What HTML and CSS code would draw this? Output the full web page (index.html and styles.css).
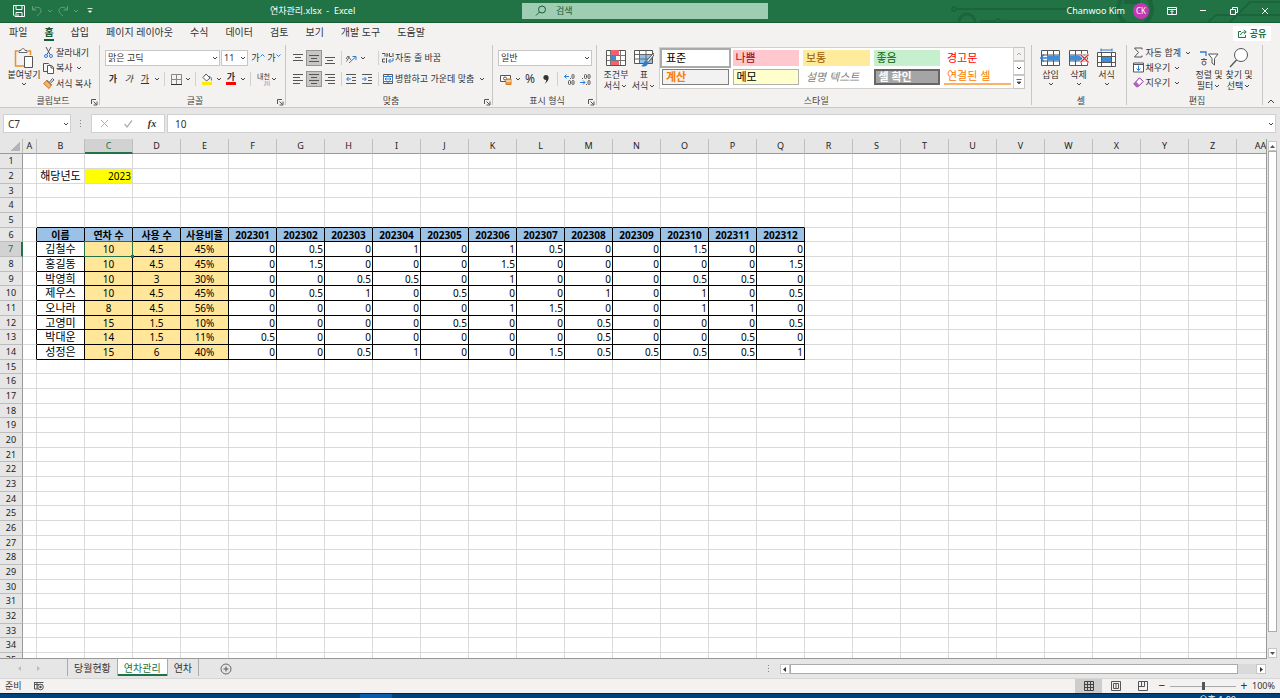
FILE: index.html
```
<!DOCTYPE html>
<html lang="ko">
<head>
<meta charset="utf-8">
<meta name="viewport" content="width=device-width, initial-scale=1">
<title>연차관리.xlsx - Excel</title>
<link rel="stylesheet" href="styles.css">
</head>
<body>
<svg class="defs" aria-hidden="true">
<symbol id="i-chev" viewBox="0 0 8 8"><path d="M2 3l2 2 2-2" fill="none" stroke="#444"/></symbol>
<symbol id="i-launch" viewBox="0 0 8 8"><path d="M1.500 6V1.500H6M3.500 3.500l3 3M7 3.500V7H3.500" fill="none" stroke="#555"/></symbol>
</svg>

<header class="titlebar">
<div class="quick">
<button aria-label="저장"><svg width="12" height="12" viewBox="0 0 12 12"><path d="M.5.5h11v11H2L.5 10zM3 .5v4h6v-4M3 11V7.500h6V11M5 11V9" fill="none" stroke="#fff"/></svg></button>
<button class="dim" aria-label="실행 취소"><svg width="12" height="12" viewBox="0 0 12 12"><path d="M1.500 1v4h4M2 4.500C5 1 10 2 10 5.500 10 8 8 9 6 11" fill="none" stroke="#fff"/></svg></button>
<button class="dim small" aria-label="취소 목록"><svg width="8" height="8" viewBox="0 0 8 8"><path d="M2 3l2 2 2-2" fill="none" stroke="#fff"/></svg></button>
<button class="dim" aria-label="다시 실행"><svg width="12" height="12" viewBox="0 0 12 12"><path d="M10.500 1v4h-4M10 4.500C7 1 2 2 2 5.500 2 8 4 9 6 11" fill="none" stroke="#fff"/></svg></button>
<button class="dim small" aria-label="다시 실행 목록"><svg width="8" height="8" viewBox="0 0 8 8"><path d="M2 3l2 2 2-2" fill="none" stroke="#fff"/></svg></button>
<button class="custom" aria-label="도구 모음 사용자 지정"><svg width="8" height="8" viewBox="0 0 8 8"><path d="M1.500 1.500h5M2.500 4h3L4 5.500z" fill="#fff" stroke="#fff" stroke-width=".8"/></svg></button>
</div>
<div class="doc">연차관리.xlsx&nbsp; -&nbsp; Excel</div>
<label class="search"><svg width="12" height="12" viewBox="0 0 12 12"><circle cx="7" cy="4.500" r="3.500" fill="none" stroke="#185c37"/><path d="M4.500 7L1 10.500" stroke="#185c37"/></svg><input type="text" placeholder="검색" aria-label="검색"></label>
<svg class="circuit" width="330" height="22" viewBox="0 0 330 22" aria-hidden="true"><g fill="none" stroke="#1c653c" stroke-width="2"><circle cx="4" cy="9" r="2"/><path d="M6 9h110"/><circle cx="120" cy="9" r="2"/><circle cx="17" cy="22" r="8" stroke-width="3"/><path d="M30 21h16M50 21h90"/><circle cx="48" cy="21" r="2"/><path d="M258 22l8-7h64M280 22l20-20h30"/><circle cx="185" cy="9" r="17" stroke-width="4"/><path d="M174 2h14v12" stroke-width="4"/></g></svg>
<div class="account">
<span class="user">Chanwoo Kim</span>
<span class="avatar">CK</span>
</div>
<div class="winbtns">
<button aria-label="리본 표시 옵션"><svg width="10" height="8" viewBox="0 0 10 8"><path d="M.5.5h9v7h-9zM.5 2.500h9M5 7V4M3.500 5L5 3.500 6.500 5" fill="none" stroke="#fff"/></svg></button>
<button aria-label="최소화"><svg width="8" height="8" viewBox="0 0 8 8"><path d="M1 3.500h6" stroke="#fff"/></svg></button>
<button aria-label="이전 크기로"><svg width="8" height="8" viewBox="0 0 8 8"><path d="M.5 2.500h5v5h-5zM2.500 2V.5h5v5H6" fill="none" stroke="#fff"/></svg></button>
<button aria-label="닫기"><svg width="8" height="8" viewBox="0 0 8 8"><path d="M1 1l6 6M7 1L1 7" stroke="#fff"/></svg></button>
</div>
</header>

<nav class="tabs">
<button>파일</button>
<button class="on">홈</button>
<button>삽입</button>
<button>페이지 레이아웃</button>
<button>수식</button>
<button>데이터</button>
<button>검토</button>
<button>보기</button>
<button>개발 도구</button>
<button>도움말</button>
<button class="share"><svg width="9" height="9" viewBox="0 0 9 9"><path d="M3 2.500H.5v6h7V6M2.500 6c.5-2 2-3 5-3M6 .8L8.200 3 6 5.200" fill="none" stroke="#217346"/></svg>공유</button>
</nav>

<section class="ribbon">
<div class="group g-clip">
<div class="body">
<button class="big"><svg width="20" height="20" viewBox="0 0 20 20"><path d="M4 3H1.500v15H10M14 3h2.500v4" fill="none" stroke="#e8912d" stroke-width="1.500"/><path d="M5 4.500V2.500h2C7 0 11 0 11 2.500h2v2z" fill="#fff" stroke="#666"/><path d="M10.500 8.500h8v11h-8z" fill="#fff" stroke="#555"/></svg>붙여넣기<svg class="chev"><use href="#i-chev"/></svg></button>
<div class="stack">
<button><svg width="11" height="11" viewBox="0 0 11 11"><path d="M3 0l4 7.500M8 0L4 7.500" stroke="#555" fill="none"/><circle cx="3" cy="9" r="1.500" fill="none" stroke="#2b7cd3"/><circle cx="8" cy="9" r="1.500" fill="none" stroke="#2b7cd3"/></svg>잘라내기</button>
<button><svg width="11" height="11" viewBox="0 0 11 11"><path d="M4 8.500H.5v-8h5l1 1" fill="none" stroke="#555"/><path d="M4.500 2.500h4l2 2v6h-6zM8 2.500v2.500h2.500" fill="#fff" stroke="#555"/></svg>복사<svg class="chev"><use href="#i-chev"/></svg></button>
<button><svg width="11" height="11" viewBox="0 0 11 11"><path d="M7 3.500l2.500-3L11 2 8 4.500z" fill="#fff" stroke="#555"/><path d="M4 2.500L8.500 7 6 10.500.5 5.500z" fill="#f3b469" stroke="#d47a1c"/><path d="M3.500 2l5 5" stroke="#555"/></svg>서식 복사</button>
</div>
</div>
<div class="caption">클립보드<button class="launch" aria-label="클립보드 옵션"><svg width="8" height="8"><use href="#i-launch"/></svg></button></div>
</div>

<div class="group g-font">
<div class="lines">
<div class="line">
<select class="face" aria-label="글꼴"><option>맑은 고딕</option></select>
<select class="size" aria-label="글꼴 크기"><option>11</option></select>
<button class="ic">가<svg class="mark" width="5" height="5" viewBox="0 0 5 5"><path d="M.5 3.500l2-2 2 2" fill="none" stroke="#2b7cd3"/></svg></button>
<button class="ic">가<svg class="mark" width="5" height="5" viewBox="0 0 5 5"><path d="M.5 1.500l2 2 2-2" fill="none" stroke="#2b7cd3"/></svg></button>
</div>
<div class="line">
<button class="ic bold">가</button>
<button class="ic ital">가</button>
<button class="ic"><u>가</u></button>
<svg class="chev"><use href="#i-chev"/></svg>
<i class="sep"></i>
<button class="ic" aria-label="테두리"><svg width="11" height="11" viewBox="0 0 11 11"><path d="M.5.5h10v10H.5z" fill="none" stroke="#888"/><path d="M5.500 1v9M1 5.500h9" stroke="#888" /><path d="M0 10.500h11" stroke="#333"/></svg></button>
<svg class="chev"><use href="#i-chev"/></svg>
<i class="sep"></i>
<button class="ic" aria-label="채우기 색"><svg width="12" height="12" viewBox="0 0 12 12"><path d="M5 1l4 4-3.500 3L2 4.500z" fill="#fff" stroke="#555"/><path d="M8 3.500c2 0 2.500 1.500 2.500 4" fill="none" stroke="#2b7cd3"/><path d="M1 9h10v3H1z" fill="#ffeb00"/></svg></button>
<svg class="chev"><use href="#i-chev"/></svg>
<button class="ic fontcolor">가</button>
<svg class="chev"><use href="#i-chev"/></svg>
<i class="sep"></i>
<button class="ic ruby">내천<small>川</small></button>
<svg class="chev"><use href="#i-chev"/></svg>
</div>
</div>
<div class="caption">글꼴<button class="launch" aria-label="글꼴 옵션"><svg width="8" height="8"><use href="#i-launch"/></svg></button></div>
</div>

<div class="group g-align">
<div class="lines">
<div class="line">
<button class="ic" aria-label="위쪽 맞춤"><svg width="10" height="11" viewBox="0 0 10 11"><path d="M0 1.500h10M2 4.500h6M0 7.500h10" stroke="#555"/></svg></button>
<button class="ic on" aria-label="가운데 맞춤"><svg width="10" height="11" viewBox="0 0 10 11"><path d="M0 2.500h10M2 5.500h6M0 8.500h10" stroke="#555"/></svg></button>
<button class="ic" aria-label="아래쪽 맞춤"><svg width="10" height="11" viewBox="0 0 10 11"><path d="M0 4.500h10M2 7.500h6M0 10.500h10" stroke="#555"/></svg></button>
<i class="sep tight"></i>
<button class="ic" aria-label="방향"><svg width="12" height="11" viewBox="0 0 12 11"><path d="M1 6l2-3 3 4M1.500 8.500l3-5" fill="none" stroke="#666"/><path d="M4 10l6.500-6M7.500 3.500h3.500V7" fill="none" stroke="#2b7cd3"/></svg></button>
<svg class="chev"><use href="#i-chev"/></svg>
<i class="sep wrapsep"></i>
<button class="txt"><svg width="12" height="12" viewBox="0 0 12 12"><path d="M0 1.500h3v3M5 1v4M5 3h1.500M7.500 1v3.500H10M11 1v4M3 7H.5v3H3M4.500 6v5" fill="none" stroke="#555"/><path d="M11 6v3H7M8.500 7L6.500 9l2 2" fill="none" stroke="#2b7cd3"/></svg>자동 줄 바꿈</button>
</div>
<div class="line">
<button class="ic" aria-label="왼쪽 맞춤"><svg width="10" height="10" viewBox="0 0 10 10"><path d="M0 .5h10M0 3.500h7M0 6.500h10M0 9.500h7" stroke="#555"/></svg></button>
<button class="ic on" aria-label="가운데 맞춤"><svg width="10" height="10" viewBox="0 0 10 10"><path d="M0 .5h10M2 3.500h6M0 6.500h10M2 9.500h6" stroke="#555"/></svg></button>
<button class="ic" aria-label="오른쪽 맞춤"><svg width="10" height="10" viewBox="0 0 10 10"><path d="M0 .5h10M3 3.500h7M0 6.500h10M3 9.500h7" stroke="#555"/></svg></button>
<i class="sep tight"></i>
<button class="ic" aria-label="내어쓰기"><svg width="10" height="10" viewBox="0 0 10 10"><path d="M0 .5h10M6 3.500h4M6 6.500h4M0 9.500h10" stroke="#555"/><path d="M5 5H1M2.500 3L.7 5l1.800 2" fill="none" stroke="#2b7cd3"/></svg></button>
<button class="ic" aria-label="들여쓰기"><svg width="10" height="10" viewBox="0 0 10 10"><path d="M0 .5h10M6 3.500h4M6 6.500h4M0 9.500h10" stroke="#555"/><path d="M0 5h4M2.500 3l1.800 2-1.800 2" fill="none" stroke="#2b7cd3"/></svg></button>
<i class="sep tight"></i>
<button class="txt"><svg width="12" height="12" viewBox="0 0 12 12"><path d="M1.500 1.500h9v9h-9zM6 1v2.500M6 8.500V11" fill="none" stroke="#555"/><path d="M1.500 3.500h9v5h-9z" fill="#fff" stroke="#2b7cd3"/><path d="M3 6h6M4.500 4.500L3 6l1.500 1.500M7.500 4.500L9 6 7.500 7.500" fill="none" stroke="#2b7cd3"/></svg>병합하고 가운데 맞춤<svg class="chev"><use href="#i-chev"/></svg></button>
</div>
</div>
<div class="caption">맞춤<button class="launch" aria-label="맞춤 옵션"><svg width="8" height="8"><use href="#i-launch"/></svg></button></div>
</div>

<div class="group g-num">
<div class="lines">
<div class="line">
<select class="fmt" aria-label="표시 형식"><option>일반</option></select>
</div>
<div class="line">
<button class="ic" aria-label="회계 표시 형식"><svg width="12" height="11" viewBox="0 0 12 11"><path d="M.5 1.500h10v6H.5z" fill="#fff" stroke="#555"/><circle cx="5" cy="4.500" r="1.500" fill="none" stroke="#555"/><path d="M6 5h5v5.500H6z" fill="#ed9b47" stroke="#d47a1c"/><path d="M6 7h5" stroke="#fff"/></svg></button>
<svg class="chev"><use href="#i-chev"/></svg>
<button class="ic pct">%</button>
<button class="ic" aria-label="쉼표 스타일"><svg width="6" height="9" viewBox="0 0 6 9"><path d="M3 0c4 0 3.500 6-1.500 9 1.500-2 2-3 1.500-4C-.5 5-.5 0 3 0z" fill="#333"/></svg></button>
<i class="sep"></i>
<button class="ic" aria-label="자릿수 늘림"><svg width="11" height="11" viewBox="0 0 11 11"><path d="M5 2.500H.5M2.500.5l-2 2 2 2" fill="none" stroke="#2b7cd3"/><g fill="none" stroke="#555"><rect x="8" y=".5" width="2" height="4" rx="1"/><rect x="4.500" y="6.500" width="2" height="4" rx="1"/><rect x="8" y="6.500" width="2" height="4" rx="1"/><path d="M6 4.500h1"/></g></svg></button>
<button class="ic" aria-label="자릿수 줄임"><svg width="11" height="11" viewBox="0 0 11 11"><path d="M0 8.500h5M3 6.500l2 2-2 2" fill="none" stroke="#2b7cd3"/><g fill="none" stroke="#555"><rect x="4.500" y=".5" width="2" height="4" rx="1"/><rect x="8" y=".5" width="2" height="4" rx="1"/><rect x="8" y="6.500" width="2" height="4" rx="1"/><path d="M2 4.500h1M6 10.500h1"/></g></svg></button>
</div>
</div>
<div class="caption">표시 형식<button class="launch" aria-label="표시 형식 옵션"><svg width="8" height="8"><use href="#i-launch"/></svg></button></div>
</div>

<div class="group g-style">
<div class="body">
<button class="big"><svg width="20" height="18" viewBox="0 0 20 18"><path d="M.5 1.500h19v15H.5z" fill="#fff" stroke="#555"/><path d="M5 1h8v15H5z" fill="#f0636b"/><path d="M5 6h5v5H5z" fill="#3c8ddb"/><path d="M10 6h5v5h-5z" fill="#fff"/><path d="M1 6.500h18M1 11.500h18M4.500 2v14M14.500 2v14" stroke="#777"/></svg>조건부<span>서식<svg class="chev"><use href="#i-chev"/></svg></span></button>
<button class="big"><svg width="20" height="18" viewBox="0 0 20 18"><path d="M.5 1.500h18v13H.5z" fill="#fff" stroke="#555"/><path d="M6 6h12v8H6z" fill="#8fc3ee"/><path d="M1 5.500h17M1 10h17M5.500 2v12M12 2v12" stroke="#666"/><path d="M19.500 4l-7 8 1.500 1.500L20 6z" fill="#fff" stroke="#555"/><path d="M12 12c-3 0-2 4-5 5 4 1.500 7 0 7-3.500z" fill="#2b7cd3"/></svg>표<span>서식<svg class="chev"><use href="#i-chev"/></svg></span></button>
<div class="gallery">
<button class="s-normal">표준</button>
<button class="s-bad">나쁨</button>
<button class="s-mid">보통</button>
<button class="s-good">좋음</button>
<button class="s-warn">경고문</button>
<button class="s-calc">계산</button>
<button class="s-memo">메모</button>
<button class="s-desc">설명 텍스트</button>
<button class="s-check">셀 확인</button>
<button class="s-link">연결된 셀</button>
</div>
<div class="spin">
<button disabled aria-label="위로"><svg width="8" height="8" viewBox="0 0 8 8"><path d="M2 5l2-2 2 2" fill="none" stroke="#aaa"/></svg></button>
<button aria-label="아래로"><svg width="8" height="8"><use href="#i-chev"/></svg></button>
<button aria-label="자세히"><svg width="8" height="8" viewBox="0 0 8 8"><path d="M1.500 1.500h5M2 4h4L4 6z" fill="#444" stroke="#444" stroke-width=".8"/></svg></button>
</div>
</div>
<div class="caption">스타일</div>
</div>

<div class="group g-cell">
<div class="body">
<button class="big"><svg width="21" height="18" viewBox="0 0 21 18"><path d="M1.500 1.500h18v15h-18zM1 6h19M1 12h19M7.500 1v16M13.500 1v16" fill="#fff" stroke="#555"/><path d="M7 6.500h13v5H7z" fill="#3c8ddb"/><path d="M7 9H1M4 5.500L.7 9 4 12.500" fill="none" stroke="#2b7cd3" stroke-width="1.500"/></svg>삽입<svg class="chev"><use href="#i-chev"/></svg></button>
<button class="big"><svg width="21" height="18" viewBox="0 0 21 18"><path d="M1.500 1.500h18v15h-18zM1 6h19M1 12h19M7.500 1v16M13.500 1v16" fill="#fff" stroke="#555"/><path d="M2 6.500h11v5H2z" fill="#3c8ddb"/><path d="M12.500 5.500l8 8M20.500 5.500l-8 8" stroke="#f3f2f1" stroke-width="3"/><path d="M12.500 5.500l8 8M20.500 5.500l-8 8" stroke="#d13438" stroke-width="1.300"/></svg>삭제<svg class="chev"><use href="#i-chev"/></svg></button>
<button class="big"><svg width="21" height="20" viewBox="0 0 21 20"><path d="M5 .5v3M16 .5v3M5 2h11" stroke="#2b7cd3"/><path d="M1.500 4.500h18v14h-18zM1 8.500h19M1 14.500h19M5.500 4v15M15.500 4v15" fill="#fff" stroke="#555"/><path d="M6 9h9v5H6z" fill="#3c8ddb"/></svg>서식<svg class="chev"><use href="#i-chev"/></svg></button>
</div>
<div class="caption">셀</div>
</div>

<div class="group g-edit">
<div class="body">
<div class="stack">
<button><svg width="11" height="11" viewBox="0 0 11 11"><path d="M9 2.500V1H1.500l4 4.500-4 4.500H9V8.500" fill="none" stroke="#555"/></svg>자동 합계<svg class="chev"><use href="#i-chev"/></svg></button>
<button><svg width="11" height="11" viewBox="0 0 11 11"><path d="M.5 1h10v9H.5zM.5 2.500h10" fill="#fff" stroke="#555"/><path d="M5.500 3.500v5M3.500 6.500l2 2 2-2" fill="none" stroke="#2b7cd3"/></svg>채우기<svg class="chev"><use href="#i-chev"/></svg></button>
<button><svg width="11" height="11" viewBox="0 0 11 11"><path d="M6.500.8L10.200 4.500 5 9.700H3.500L.8 7z" fill="#fff" stroke="#881798"/><path d="M3 4.500l3.500 3.700L4.800 9.700H3.500L.8 7z" fill="#b065bd"/></svg>지우기<svg class="chev"><use href="#i-chev"/></svg></button>
</div>
<button class="big"><svg width="20" height="18" viewBox="0 0 20 18"><path d="M1 3h6v4" fill="none" stroke="#2b7cd3" stroke-width="1.300"/><path d="M2 10.500h6M5 9v1.500" stroke="#555"/><circle cx="5" cy="14" r="2" fill="none" stroke="#555"/><path d="M9.500 5h9.500l-3.500 4.500V16L13 14V9.500z" fill="#fff" stroke="#555"/></svg>정렬 및<span>필터<svg class="chev"><use href="#i-chev"/></svg></span></button>
<button class="big"><svg width="20" height="20" viewBox="0 0 20 20"><circle cx="12" cy="7" r="6.500" fill="#fff" stroke="#555"/><path d="M7.500 12L1 19" stroke="#555" stroke-width="1.300"/></svg>찾기 및<span>선택<svg class="chev"><use href="#i-chev"/></svg></span></button>
</div>
<div class="caption">편집</div>
</div>
<button class="collapse" aria-label="리본 축소"><svg width="8" height="8" viewBox="0 0 8 8"><path d="M1 6l3-3 3 3" fill="none" stroke="#444"/></svg></button>
</section>

<section class="formula">
<select class="name" aria-label="이름 상자"><option>C7</option></select>
<svg width="4" height="10" viewBox="0 0 4 10"><path d="M1 1h1v1H1zM1 4h1v1H1zM1 7h1v1H1z" fill="#888"/></svg>
<div class="fxbtns">
<button aria-label="취소"><svg width="9" height="9" viewBox="0 0 9 9"><path d="M1 1l7 7M8 1L1 8" stroke="#b0b0b0"/></svg></button>
<button aria-label="입력"><svg width="9" height="9" viewBox="0 0 9 9"><path d="M.5 5l2.500 3 5-6.500" fill="none" stroke="#b0b0b0" stroke-width="1.300"/></svg></button>
<button class="fx"><i>fx</i></button>
</div>
<div class="fxinput"><input type="text" value="10" aria-label="수식 입력줄"><svg width="8" height="8"><use href="#i-chev"/></svg></div>
</section>

<main class="work">
<div class="pane"><table id="sheet"></table></div>
<div class="vbar">
<button aria-label="위로"><svg width="7" height="7" viewBox="0 0 7 7"><path d="M1 5h5L3.500 2z" fill="#555"/></svg></button>
<div class="thumb"></div>
<button aria-label="아래로"><svg width="7" height="7" viewBox="0 0 7 7"><path d="M1 2h5L3.500 5z" fill="#555"/></svg></button>
</div>
</main>

<nav class="sheets">
<div class="arrows"><button aria-label="이전 시트"><svg width="7" height="7" viewBox="0 0 7 7"><path d="M5 1v5L2 3.500z" fill="#bbb"/></svg></button><button aria-label="다음 시트"><svg width="7" height="7" viewBox="0 0 7 7"><path d="M2 1v5l3-2.500z" fill="#bbb"/></svg></button></div>
<button class="sh first">당월현황</button>
<button class="sh on">연차관리</button>
<button class="sh last">연차</button>
<button class="add" aria-label="새 시트"><svg width="12" height="12" viewBox="0 0 12 12"><circle cx="6" cy="6" r="5" fill="none" stroke="#666"/><path d="M3.500 6h5M6 3.500v5" stroke="#555"/></svg></button>
<svg class="grip" width="4" height="10" viewBox="0 0 4 10"><path d="M1 1h1v1H1zM1 4h1v1H1zM1 7h1v1H1z" fill="#888"/></svg>
<div class="hbar">
<button aria-label="왼쪽으로"><svg width="7" height="7" viewBox="0 0 7 7"><path d="M5 1v5L2 3.500z" fill="#333"/></svg></button>
<div class="thumb"></div>
<button aria-label="오른쪽으로"><svg width="7" height="7" viewBox="0 0 7 7"><path d="M2 1v5l3-2.500z" fill="#333"/></svg></button>
</div>
</nav>

<footer class="status">
<span>준비</span>
<svg width="11" height="10" viewBox="0 0 11 10"><path d="M.5 1.500h9M.5 1v7H4M.5 3.500h8M3 2v6" fill="none" stroke="#555"/><circle cx="6.500" cy="6" r="2.800" fill="#f3f2f1" stroke="#555"/><circle cx="6.500" cy="6" r="1.200" fill="#444"/></svg>
<div class="views">
<button class="on" aria-label="기본"><svg width="10" height="10" viewBox="0 0 10 10"><path d="M.5.5h9v9h-9zM3.500 0v10M6.500 0v10M0 3.500h10M0 6.500h10" fill="none" stroke="#444"/></svg></button>
<button aria-label="페이지 레이아웃"><svg width="10" height="10" viewBox="0 0 10 10"><path d="M.5.5h9v9h-9zM2.500 2.500h5v5h-5zM4 4h2M4 6h2" fill="none" stroke="#555"/></svg></button>
<button aria-label="페이지 나누기 미리 보기"><svg width="10" height="10" viewBox="0 0 10 10"><path d="M.5.5h9v9h-9zM.5 5.500h6V.5M3.500 0v5" fill="none" stroke="#555"/></svg></button>
</div>
<button class="zb" aria-label="축소">−</button>
<input class="zoom" type="range" min="10" max="190" value="100" aria-label="확대/축소">
<button class="zb" aria-label="확대">+</button>
<span class="pctval">100%</span>
</footer>
<div class="taskbar"><span class="running"></span><span class="clock">오후 1:00</span></div>

<script>
var cols = 'A B C D E F G H I J K L M N O P Q R S T U V W X Y Z AA'.split(' ');
var cells = {
2: ['해당년도', '2023'],
6: ['이름', '연차 수', '사용 수', '사용비율', '202301', '202302', '202303', '202304', '202305', '202306', '202307', '202308', '202309', '202310', '202311', '202312'],
7: ['김철수', 10, 4.5, '45%', 0, 0.5, 0, 1, 0, 1, 0.5, 0, 0, 1.5, 0, 0],
8: ['홍길동', 10, 4.5, '45%', 0, 1.5, 0, 0, 0, 1.5, 0, 0, 0, 0, 0, 1.5],
9: ['박영희', 10, 3, '30%', 0, 0, 0.5, 0.5, 0, 1, 0, 0, 0, 0.5, 0.5, 0],
10: ['제우스', 10, 4.5, '45%', 0, 0.5, 1, 0, 0.5, 0, 0, 1, 0, 1, 0, 0.5],
11: ['오나라', 8, 4.5, '56%', 0, 0, 0, 0, 0, 1, 1.5, 0, 0, 1, 1, 0],
12: ['고영미', 15, 1.5, '10%', 0, 0, 0, 0, 0.5, 0, 0, 0.5, 0, 0, 0, 0.5],
13: ['박대운', 14, 1.5, '11%', 0.5, 0, 0, 0, 0, 0, 0, 0.5, 0, 0, 0.5, 0],
14: ['성정은', 15, 6, '40%', 0, 0, 0.5, 1, 0, 0, 1.5, 0.5, 0.5, 0.5, 0.5, 1]
};

function cls(r, c){
var k = [];
if(r>=6 && r<=14 && c<=16){k.push('br');}
if(r>=5 && r<=14 && c>=1 && c<=16){k.push('bb');}
if(c<1 || c>16){return k.join(' ');}
if(r==2 && c==1){k.push('ko');}
if(r==2 && c==2){k.push('yellow');}
if(r==6){k.push(c<5?'head ko':'head');}
if(r>6 && r<15 && c==1){k.push('ko');}
if(r>6 && r<15 && c>1 && c<5){k.push('sum');}
if(r==7 && c==2){k.push('cur');}
return k.join(' ');
}

var h = '<colgroup><col class="c-num"><col class="c-a">';
for(var i=1;i<cols.length;i++){h+='<col class="c-n">';}
h+='</colgroup><thead><tr><th class="corner"></th>';
cols.forEach(function(n){h+='<th'+(n=='C'?' class="sel"':'')+'>'+n+'</th>';});
h+='</tr></thead><tbody>';
for(var r=1;r<=35;r++){
h+='<tr><th'+(r==7?' class="sel"':'')+'>'+r+'</th>';
for(var c=0;c<cols.length;c++){
var v = cells[r] && c>0 ? cells[r][c-1] : '';
h+='<td class="'+cls(r,c)+'">'+(v===undefined?'':v)+'</td>';
}
h+='</tr>';
}
document.getElementById('sheet').innerHTML = h+'</tbody>';
</script>
</body>
</html>
```
FILE: styles.css
```
*{box-sizing:border-box;}
body{margin:0;height:100vh;display:flex;flex-direction:column;overflow:hidden;background:#e6e6e6;color:#333;font:9px/12px "Noto Sans","Noto Sans CJK KR",sans-serif;white-space:nowrap;}
button,input,select{font:inherit;color:inherit;border:0;padding:0;margin:0;background:none;border-radius:0;outline:0;}
button{display:flex;align-items:center;justify-content:center;}
svg{flex:none;display:block;}
.defs{position:absolute;width:0;height:0;}
.chev{width:8px;height:8px;}

/* title bar */
.titlebar{position:relative;display:grid;grid-template-columns:270px 252px 246px 1fr auto;align-items:center;height:23px;background:#217346;border-bottom:1px solid #155c33;color:#fff;flex:none;}
.quick{display:flex;align-items:center;padding-left:10px;}
.quick button{width:18px;height:18px;}
.quick .small{width:8px;}
.quick .custom{width:20px;}
.dim{opacity:.3;}
.search{display:flex;align-items:center;height:16px;padding-left:13px;gap:9px;background:#9fcdb3;color:#185c37;}
.search input{flex:1;min-width:0;}
.search input::placeholder{color:#185c37;opacity:1;}
.circuit{position:absolute;right:0;top:0;}
.account{position:relative;display:flex;align-items:center;justify-content:flex-end;gap:8px;height:22px;}
.avatar{width:16px;height:16px;line-height:16px;border-radius:50%;background:#c239b3;font-size:8px;text-align:center;}
.winbtns{position:relative;display:flex;padding-left:7px;}
.winbtns button{width:31px;height:22px;}

/* ribbon tabs */
.tabs{display:flex;align-items:flex-start;height:22px;padding-left:9px;gap:17px;background:#f3f2f1;font-size:10px;flex:none;}
.tabs button{height:18px;}
.tabs .on{border-bottom:2px solid #185c37;padding-top:2px;font-weight:bold;color:#185c37;}
.tabs .share{margin:3px 9px 0 auto;width:38px;height:15px;gap:3px;background:#fff;color:#217346;font-weight:bold;font-size:9px;}

/* ribbon */
.ribbon{display:flex;height:63px;padding-bottom:2px;background:#f3f2f1;border-bottom:1px solid #c8c8c8;flex:none;}
.group{display:flex;flex-direction:column;justify-content:space-between;height:60px;border-right:1px solid #c6c6c6;flex:none;}
.g-clip{width:100px;padding-left:7px;}
.g-font{width:186px;padding-left:5px;}
.g-align{width:207px;padding-left:4px;}
.g-num{width:104px;padding-left:5px;}
.g-style{flex:1 1 434px;padding-left:5px;}
.g-cell{width:95px;padding-left:5px;}
.g-edit{width:136px;padding-left:6px;}
.body{display:flex;align-items:flex-start;height:48px;}
.caption{position:relative;height:8px;line-height:8px;text-align:center;color:#444;}
.launch{position:absolute;right:1px;top:1px;}
.big{flex-direction:column;justify-content:flex-start;width:28px;padding-top:3px;line-height:11px;}
.big>svg:first-child{height:20px;margin-bottom:1px;}
.big span{display:flex;align-items:center;}
.g-clip .big{width:34px;}
.stack{display:flex;flex-direction:column;justify-content:space-between;height:46px;padding-left:2px;}
.stack button{justify-content:flex-start;height:15px;gap:2px;}
.lines{display:flex;flex-direction:column;gap:5px;padding-top:5px;}
.line{display:flex;align-items:center;height:16px;}
.ic{position:relative;width:16px;height:16px;flex:none;}
.ic.on{background:#c8c6c4;border:1px solid #979593;}
.mark{margin-bottom:6px;}
.bold{font-weight:bold;}
.ital{font-style:italic;}
.fontcolor{align-items:flex-start;font-weight:bold;}
.fontcolor::after{content:"";position:absolute;left:3px;right:3px;bottom:2px;height:3px;background:#f00;}
.ruby{flex-direction:column;align-items:flex-end;font-size:7px;line-height:7px;}
.ruby small{font-size:6px;line-height:6px;color:#2b7cd3;}
.pct{font-size:12px;}
.sep{width:1px;height:14px;margin:0 3px;background:#d2d0ce;flex:none;}
.sep.tight{margin:0 1px 0 3px;}
.sep.wrapsep{margin:0 1px 0 11px;}
.txt{gap:1px;padding-left:2px;}
.txt .chev{margin-left:3px;}
select{appearance:none;height:16px;padding:0 2px;border:1px solid #c8c6c4;background:#fff url("data:image/svg+xml,%3Csvg xmlns='http://www.w3.org/2000/svg' width='8' height='8'%3E%3Cpath d='M2 3l2 2 2-2' fill='none' stroke='%23444'/%3E%3C/svg%3E") no-repeat right center;}
.face{width:115px;margin-right:1px;}
.size{width:27px;margin-right:2px;}
.fmt{width:94px;}
.gallery{display:grid;grid-template-columns:repeat(5,1fr);grid-template-rows:18px 18px;gap:1px 2px;flex:1;height:42px;margin:2px 0 0 1px;padding:1px;background:#fff;border:1px solid #d2d0ce;font-size:11px;}
.gallery button{justify-content:flex-start;height:16px;margin:1px;padding-left:3px;}
.gallery .s-normal{height:20px;margin:-1px -1px 0;padding-left:4px;border:2px solid #aaa;color:#000;}
.s-bad{background:#ffc7ce;color:#9c0006;}
.s-mid{background:#ffeb9c;color:#9c5700;}
.s-good{background:#c6efce;color:#006100;}
.s-warn{color:#f00;}
.gallery .s-calc{border:1px solid #7f7f7f;background:#f2f2f2;color:#fa7d00;font-weight:bold;}
.gallery .s-memo{border:1px solid #b2b2b2;background:#ffffcc;color:#000;}
.s-desc{color:#7f7f7f;font-style:italic;}
.gallery .s-check{border:2px solid #666;background:#a5a5a5;color:#fff;font-weight:bold;}
.gallery .s-link{color:#fa7d00;border-bottom:2px solid #ffb068;}
.spin{display:flex;flex-direction:column;width:11px;height:42px;margin:2px 6px 0 0;}
.spin button{flex:1;border:1px solid #c8c6c4;border-left:0;background:#fff;}
.spin button:disabled{background:#f3f2f1;}
.g-edit .stack{padding:0;width:60px;height:45px;}
.g-edit .big{width:31px;}
.g-edit .stack .chev{margin-left:1px;}
.g-edit .big:nth-child(2){padding-left:2px;}
.collapse{align-self:flex-end;flex:1 0 17px;max-width:18px;height:8px;}

/* formula bar */
.formula{display:flex;align-items:center;gap:7px;height:31px;padding:0 4px 0 3px;font-size:10px;flex:none;}
.formula .name{width:68px;height:19px;padding-left:4px;border-color:#d0d0d0;margin-right:1px;}
.fxbtns{display:flex;height:19px;margin-left:1px;background:#fff;border:1px solid #d0d0d0;}
.fxbtns button{width:24px;}
.fxbtns .fx{font:bold 10px/12px "Liberation Serif",serif;}
.fxinput{display:flex;align-items:center;flex:1;height:19px;margin-left:-5px;background:#fff;border:1px solid #d0d0d0;}
.fxinput input{flex:1;padding-left:7px;}

/* sheet */
.work{display:flex;flex:1;min-height:0;}
.pane{flex:1;min-width:0;overflow:hidden;background:#fff;border-right:1px solid #999;border-bottom:1px solid #999;}
#sheet{table-layout:fixed;width:1285px;border-collapse:separate;border-spacing:0;color:#000;font-size:10px;line-height:12px;}
.c-num{width:23px;}
.c-a{width:14px;}
.c-n{width:48px;}
#sheet th,#sheet td{padding:0 1px;overflow:hidden;border-right:1px solid #d9d9d9;border-bottom:1px solid #d9d9d9;}
#sheet td{text-align:right;}
#sheet th{padding:0;background:#e6e6e6;border-color:#bdbdbd;color:#222;font-size:9px;font-weight:normal;text-align:center;}
#sheet thead th{height:15px;border-bottom-color:#999;}
#sheet tbody th{border-right-color:#999;}
#sheet tbody tr{height:15px;}
#sheet tbody tr:nth-child(3n){height:14px;}
#sheet .corner{background:linear-gradient(135deg,transparent 50%,#b4b4b4 50%) no-repeat 11px 3px/9px 9px #e6e6e6;}
#sheet th.sel{background:#d2d2d2;color:#217346;}
#sheet thead th.sel{border-bottom:2px solid #217346;}
#sheet tbody th.sel{border-right:2px solid #217346;}
#sheet .br{border-right-color:#000;}
#sheet .bb{border-bottom-color:#000;}
#sheet .ko{padding:0;font-size:11px;text-align:center;}
#sheet .yellow{background:#ff0;}
#sheet .head{padding:0;background:#9bc2e6;font-weight:bold;text-align:center;}
#sheet .head.ko{font-size:10px;}
#sheet .sum{background:#ffe699;text-align:center;}
#sheet .cur{position:relative;overflow:visible;}
.cur::before{content:"";position:absolute;inset:-1px;border:1px solid #217346;}
.cur::after{content:"";position:absolute;right:-2px;bottom:-2px;width:3px;height:3px;background:#217346;}
.vbar{display:flex;flex-direction:column;width:13px;padding:2px 3px 1px 1px;}
.vbar button{height:10px;border:1px solid #c6c6c6;background:#fff;}
.vbar .thumb{flex:1;margin-bottom:16px;background:#fff;border:1px solid #ababab;}

/* sheet tabs */
.sheets{display:flex;align-items:flex-start;height:19px;font-size:10px;flex:none;}
.arrows{display:flex;width:67px;padding:3px 0 0 14px;gap:9px;}
.arrows button{width:10px;height:12px;}
.sh{height:17px;padding:0 6px;}
.sh.first{border-left:1px solid #ababab;}
.sh.last{border-right:1px solid #ababab;}
.sh.on{background:#fff;border:solid #ababab;border-width:0 1px;box-shadow:inset 0 -2px #217346;color:#217346;}
.add{width:54px;height:19px;}
.grip{margin:5px 9px 0 auto;}
.hbar{display:flex;width:38%;height:10px;margin:5px 14px 0 0;background:#dadada;}
.hbar button{width:10px;border:1px solid #c6c6c6;background:#fff;}
.hbar .thumb{flex:1;margin-right:18px;background:#fff;border:1px solid #ababab;}

/* status bar */
.status{display:flex;align-items:center;height:15px;padding:0 5px;background:#f3f2f1;border-top:1px solid #d6d6d6;flex:none;}
.status>svg{margin-left:12px;}
.views{display:flex;margin-left:auto;height:14px;}
.views button{width:27px;}
.views .on{background:#cfcdcb;}
.zb{width:12px;height:12px;font-size:12px;}
.zoom{appearance:none;width:66px;height:12px;margin:0 2px;background:linear-gradient(#aaa,#aaa) center/100% 1px no-repeat;}
.zoom::-webkit-slider-thumb{appearance:none;width:3px;height:8px;background:#555;}
.pctval{width:25px;text-align:right;}
.taskbar{display:flex;height:5px;overflow:hidden;background:#00417a;border-top:1px solid #0a2440;color:#fff;flex:none;}
.running{width:32px;margin-left:360px;background:#0a5ca8;}
.clock{margin-left:auto;padding-right:44px;line-height:12px;}
```
